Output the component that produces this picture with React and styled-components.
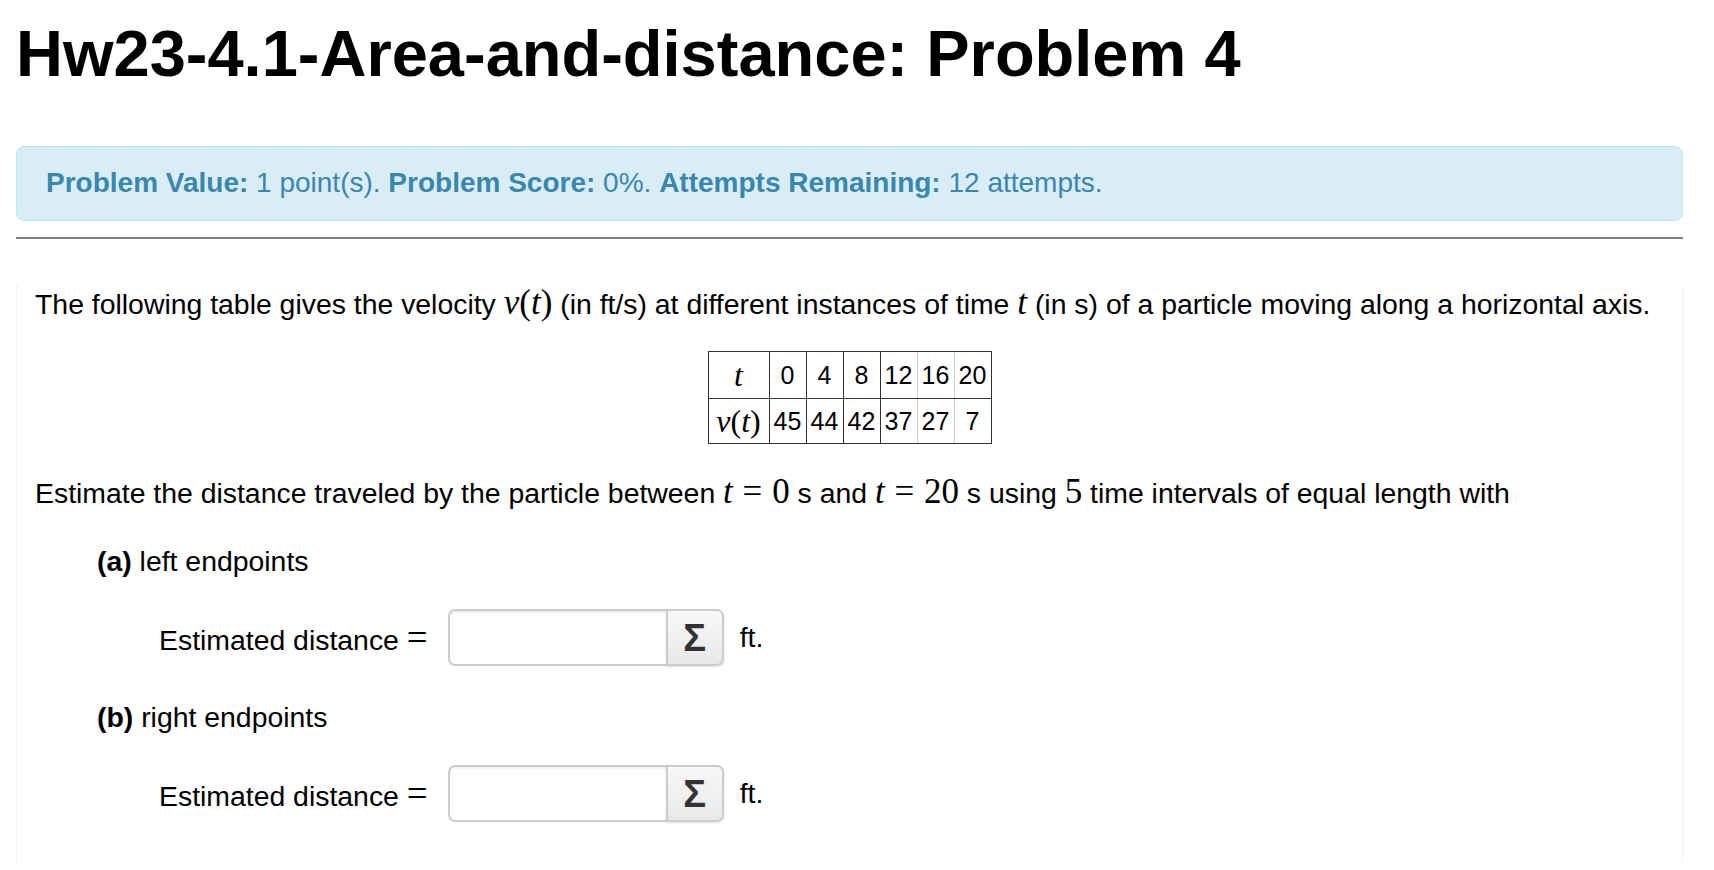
import React from "react";
import styled, { createGlobalStyle } from "styled-components";

const GlobalStyle = createGlobalStyle`
  html, body {
    margin: 0;
    padding: 0;
    background: #ffffff;
  }
  body {
    font-family: "Liberation Sans", Arial, Helvetica, sans-serif;
    color: #000;
  }
`;

const times = [0, 4, 8, 12, 16, 20];
const speeds = [45, 44, 42, 37, 27, 7];

const App = () => {
  return (
    <Page>
      <GlobalStyle />
      <Title>Hw23-4.1-Area-and-distance: Problem 4</Title>
      <Alert>
        <b>Problem Value:</b> 1 point(s). <b>Problem Score:</b> 0%.{" "}
        <b>Attempts Remaining:</b> 12 attempts.
      </Alert>
      <Rule />
      <Panel>
        <Para $top={45}>
          The following table gives the velocity{" "}
          <M>
            <V>v</V>(<V>t</V>)
          </M>{" "}
          (in ft/s) at different instances of time{" "}
          <M>
            <V>t</V>
          </M>{" "}
          (in s) of a particle moving along a horizontal axis.
        </Para>

        <TableWrap>
          <DataTable>
            <tbody>
              <tr>
                <HeadCell $h={46}>
                  <M>
                    <V>t</V>
                  </M>
                </HeadCell>
                {times.map((t, i) => (
                  <Cell key={t} $h={46} $light={i >= 4}>
                    {t}
                  </Cell>
                ))}
              </tr>
              <tr>
                <HeadCell $h={44}>
                  <M>
                    <V>v</V>(<V>t</V>)
                  </M>
                </HeadCell>
                {speeds.map((s, i) => (
                  <Cell key={i} $h={44} $light={i >= 4}>
                    {s}
                  </Cell>
                ))}
              </tr>
            </tbody>
          </DataTable>
        </TableWrap>

        <Para $top={29}>
          Estimate the distance traveled by the particle between{" "}
          <M>
            <V>t</V>
            <Eq>=</Eq>0
          </M>{" "}
          s and{" "}
          <M>
            <V>t</V>
            <Eq>=</Eq>20
          </M>{" "}
          s using <M>5</M> time intervals of equal length with
        </Para>

        <Part $top={28}>
          <b>(a)</b> left endpoints
        </Part>
        <AnswerRow>
          <Label>
            Estimated distance <LabelEq>=</LabelEq>
          </Label>
          <InputGroup>
            <AnswerInput type="text" />
            <SigmaButton type="button">Σ</SigmaButton>
          </InputGroup>
          <Unit>ft.</Unit>
        </AnswerRow>

        <Part $top={31}>
          <b>(b)</b> right endpoints
        </Part>
        <AnswerRow>
          <Label>
            Estimated distance <LabelEq>=</LabelEq>
          </Label>
          <InputGroup>
            <AnswerInput type="text" />
            <SigmaButton type="button">Σ</SigmaButton>
          </InputGroup>
          <Unit>ft.</Unit>
        </AnswerRow>
      </Panel>
    </Page>
  );
};

export default App;

const Page = styled.div`
  width: 1667px;
  padding-left: 16px;
  min-height: 870px;
  box-sizing: content-box;
`;

const Title = styled.h1`
  margin: 18px 0 0 0;
  font-size: 65px;
  line-height: 72px;
  font-weight: 700;
  letter-spacing: 0;
`;

const Alert = styled.div`
  margin-top: 56px;
  padding: 16px 29px 17px;
  background: #d9edf7;
  border: 1px solid #bce8f1;
  border-radius: 8px;
  color: #3a87ad;
  font-size: 28px;
  line-height: 40px;

  b {
    font-weight: 700;
  }
`;

const Rule = styled.div`
  margin-top: 16px;
  border-top: 2px solid #808080;
`;

const Panel = styled.div`
  border-left: 1px solid #f2f2f2;
  border-right: 1px solid #f2f2f2;
  padding: 0 18px 40px;
`;

const Para = styled.p`
  margin: ${(p) => p.$top || 0}px 0 0 0;
  font-size: 28.4px;
  line-height: 40px;
`;

const M = styled.span`
  font-family: "Liberation Serif", "Times New Roman", serif;
  font-size: 35px;
  line-height: 1;
`;

const V = styled.i`
  font-style: italic;
`;

const Eq = styled.span`
  margin: 0 0.28em;
`;

const TableWrap = styled.div`
  display: flex;
  justify-content: center;
  margin-top: 27px;
`;

const DataTable = styled.table`
  border-collapse: collapse;
  border: 1.5px solid #333;
  font-size: 25px;
`;

const HeadCell = styled.td`
  width: 60px;
  height: ${(p) => p.$h}px;
  padding: 0;
  text-align: center;
  border: 1.5px solid #333;

  ${M} {
    font-size: 32px;
  }
`;

const Cell = styled.td`
  width: 36px;
  height: ${(p) => p.$h}px;
  padding: 0;
  text-align: center;
  border-top: 1.5px solid #333;
  border-bottom: 1.5px solid #333;
  border-left: 1.5px solid ${(p) => (p.$light ? "#cfcfcf" : "#333")};
`;

const Part = styled.div`
  margin: ${(p) => p.$top || 30}px 0 0 62px;
  font-size: 28.4px;
  line-height: 40px;

  b {
    font-weight: 700;
  }
`;

const AnswerRow = styled.div`
  display: flex;
  align-items: center;
  margin: 28px 0 0 124px;
  font-size: 28.4px;
`;

const Label = styled.span`
  margin-right: 20px;
`;

const LabelEq = styled.span`
  font-family: "Liberation Serif", "Times New Roman", serif;
  font-size: 37px;
  line-height: 1;
`;

const InputGroup = styled.div`
  display: flex;
  height: 57px;
`;

const AnswerInput = styled.input`
  box-sizing: border-box;
  width: 218px;
  height: 57px;
  margin: 0;
  padding: 0 12px;
  border: 2px solid #cccccc;
  border-right: none;
  border-radius: 7px 0 0 7px;
  box-shadow: inset 0 2px 2px rgba(0, 0, 0, 0.06);
  font-size: 28px;
  font-family: inherit;
  outline: none;
`;

const SigmaButton = styled.button`
  box-sizing: border-box;
  width: 58px;
  height: 57px;
  margin: 0;
  padding: 0;
  border: 2px solid #cccccc;
  border-radius: 0 7px 7px 0;
  background: linear-gradient(#f8f8f8, #e8e8e8);
  box-shadow: 0 1px 2px rgba(0, 0, 0, 0.12);
  color: #333;
  font-family: "Liberation Sans", Arial, sans-serif;
  font-weight: 700;
  font-size: 38px;
  line-height: 1;
`;

const Unit = styled.span`
  margin-left: 16px;
`;
